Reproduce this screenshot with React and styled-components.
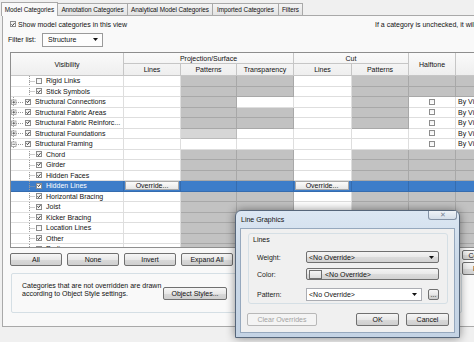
import React from "react";
import styled, { createGlobalStyle } from "styled-components";

const GlobalStyle = createGlobalStyle`
  body {
    margin: 0;
    background: #f0f0f0;
    font-family: "Liberation Sans", Arial, sans-serif;
    font-size: 7px;
    color: #111;
  }
`;

const COLS = "113px 57px 56px 57px 58px 57px 47px 80px";

const Window = styled.div`
  position: relative;
  width: 474px;
  height: 342px;
  overflow: hidden;
  background: #f0f0f0;
`;
const Main = styled.div`
  width: 600px;
`;
const TabStrip = styled.div`
  display: flex;
  align-items: flex-end;
  height: 15px;
  padding-left: 2px;
  box-sizing: border-box;
`;
const Tab = styled.div`
  position: relative;
  z-index: ${(p) => (p.$active ? 1 : 0)};
  width: ${(p) => p.$w}px;
  height: ${(p) => (p.$active ? 14 : 12)}px;
  margin-left: -1px;
  margin-bottom: ${(p) => (p.$active ? -1 : 0)}px;
  box-sizing: border-box;
  border: 1px solid #a9a9a9;
  border-bottom: none;
  background: ${(p) =>
    p.$active ? "#f9f9f9" : "linear-gradient(#f4f4f4, #e3e3e3)"};
  display: flex;
  align-items: center;
  justify-content: center;
  white-space: nowrap;
  font-size: 6.4px;
  letter-spacing: -0.05px;
`;
const Panel = styled.div`
  margin-left: 2px;
  height: 312px;
  box-sizing: border-box;
  border: 1px solid #a9a9a9;
  border-right: none;
  background: #f9f9f9;
  padding-left: 7px;
  display: flex;
  flex-direction: column;
`;
const TopRow = styled.div`
  display: grid;
  grid-template-columns: 365px auto;
  align-items: center;
  height: 10px;
  margin-top: 3px;
  white-space: nowrap;
`;
const CheckLabel = styled.label`
  display: flex;
  align-items: center;
  gap: 2px;
`;
const FilterRow = styled.div`
  display: flex;
  align-items: center;
  height: 15px;
  margin-top: 3px;
`;
const FilterLabel = styled.span`
  width: 34px;
  margin-left: -2px;
`;
const Select = styled.div`
  width: 61px;
  height: 14px;
  box-sizing: border-box;
  border: 1px solid #9a9a9a;
  background: #fdfdfd;
  display: flex;
  align-items: center;
  justify-content: space-between;
  padding: 0 4px 0 5px;
`;
const TableWrap = styled.div`
  margin-top: 5px;
  height: 196px;
  box-sizing: border-box;
  border: 1px solid #8e8e8e;
  border-right: none;
  overflow: hidden;
  background: #fff;
`;
const Head = styled.div`
  display: grid;
  grid-template-columns: ${COLS};
  grid-template-rows: 11px 12px;
  background: linear-gradient(#fafafa, #eeeeee);
`;
const HeadCell = styled.div`
  grid-column: ${(p) => p.$col};
  grid-row: ${(p) => p.$row};
  border-right: 1px solid #c6c6c6;
  border-bottom: 1px solid #c6c6c6;
  display: flex;
  align-items: center;
  justify-content: center;
  white-space: nowrap;
  overflow: hidden;
`;
const Row = styled.div`
  display: grid;
  grid-template-columns: ${COLS};
  height: 10.5px;
`;
const BG = { w: "#ffffff", g: "#c2c2c2", l: "#d6d6d6", s: "#3d7dc9" };
const Cell = styled.div`
  box-sizing: border-box;
  background: ${(p) => BG[p.$kind]};
  border-right: 1px solid rgba(0, 0, 0, 0.13);
  border-bottom: 1px solid rgba(0, 0, 0, 0.13);
  display: flex;
  align-items: center;
  justify-content: ${(p) => p.$justify || "flex-start"};
  padding-left: ${(p) => p.$pad || 0}px;
  color: ${(p) => (p.$kind === "s" ? "#fff" : "#111")};
  white-space: nowrap;
  overflow: hidden;
`;
const VisLabel = styled.span`
  margin-left: 4px;
`;
const Box = styled.span`
  display: inline-flex;
  align-items: center;
  justify-content: center;
  width: 6px;
  height: 6px;
  box-sizing: border-box;
  border: 1px solid #8c8c8c;
  background: linear-gradient(#f2f2f2, #ffffff);
  flex: none;
`;
const CellButton = styled.div`
  width: 54px;
  height: 9px;
  box-sizing: border-box;
  margin-left: 1px;
  border: 1px solid #a8a8a8;
  background: linear-gradient(#fbfbfb, #e6e6e6);
  color: #111;
  display: flex;
  align-items: center;
  justify-content: center;
`;
const Lower = styled.div`
  display: flex;
`;
const LeftCol = styled.div`
  width: 452px;
  display: flex;
  flex-direction: column;
`;
const RightCol = styled.div`
  display: flex;
  flex-direction: column;
  gap: 2px;
  padding-top: 2px;
`;
const ButtonRow = styled.div`
  display: flex;
  gap: 5px;
  margin-top: 5px;
`;
const Button = styled.div`
  width: ${(p) => p.$w || 52}px;
  height: ${(p) => p.$h || 13}px;
  box-sizing: border-box;
  border: 1px solid ${(p) => (p.$disabled ? "#b8b8b8" : "#707070")};
  border-radius: 2px;
  background: ${(p) =>
    p.$disabled ? "#f4f4f4" : "linear-gradient(#f6f6f6 0%, #e8e8e8 50%, #d9d9d9 51%, #cfcfcf 100%)"};
  color: ${(p) => (p.$disabled ? "#a3a3a3" : "#111")};
  display: flex;
  align-items: center;
  justify-content: center;
  white-space: nowrap;
  flex: none;
`;
const NoteBox = styled.div`
  margin: 7px 0 0 1px;
  height: 40px;
  box-sizing: border-box;
  border: 1px solid #d5dfe5;
  border-radius: 2px;
  display: flex;
  align-items: center;
  padding-left: 10px;
`;
const NoteText = styled.div`
  width: 141px;
  line-height: 8px;
  margin-top: -6px;
`;

/* Line Graphics dialog */
const Dialog = styled.div`
  position: absolute;
  left: 235px;
  top: 210px;
  width: 225px;
  height: 128px;
  box-sizing: border-box;
  border: 1px solid #56667a;
  border-radius: 6px 6px 0 0;
  background: linear-gradient(#dce7f3, #cbd9e8 40%, #c4d3e4);
  box-shadow: 0 0 10px rgba(0, 0, 0, 0.45);
  padding: 0 4px 4px 4px;
  display: flex;
  flex-direction: column;
`;
const TitleBar = styled.div`
  height: 17px;
  display: flex;
  align-items: flex-start;
  justify-content: space-between;
`;
const Title = styled.span`
  margin: 5px 0 0 1px;
  color: #111;
`;
const CloseBtn = styled.div`
  width: 29px;
  height: 9px;
  margin-right: -2px;
  box-sizing: border-box;
  border: 1px solid #8593a6;
  border-top: none;
  border-radius: 0 0 3px 3px;
  background: linear-gradient(#eef2f7, #d5dee9);
  display: flex;
  align-items: center;
  justify-content: center;
  color: #7a8594;
  font-size: 7px;
`;
const Client = styled.div`
  flex: 1;
  background: #f0f0f0;
  border: 1px solid #96a8bd;
  display: flex;
  flex-direction: column;
`;
const LinesGroup = styled.div`
  margin: 4px 0 0 7px;
  width: 200px;
  height: 71px;
  box-sizing: border-box;
  border: 1px solid #d5dfe5;
  border-radius: 3px;
  padding: 2px 0 0 8px;
  display: flex;
  flex-direction: column;
`;
const GroupTitle = styled.div`
  height: 8px;
  margin-left: -4px;
`;
const Field = styled.div`
  display: flex;
  align-items: center;
  height: ${(p) => p.$h}px;
  margin-top: ${(p) => p.$mt}px;
`;
const FieldLabel = styled.span`
  width: 49px;
  color: #222;
`;
const Combo = styled.div`
  width: ${(p) => p.$w || 133}px;
  height: 100%;
  box-sizing: border-box;
  border: 1px solid ${(p) => (p.$white ? "#abadb3" : "#707070")};
  border-radius: ${(p) => (p.$white ? 0 : 2)}px;
  background: ${(p) =>
    p.$white ? "#ffffff" : "linear-gradient(#f4f4f4 0%, #e9e9e9 50%, #dcdcdc 51%, #d2d2d2 100%)"};
  display: flex;
  align-items: center;
  padding: 0 4px 0 2px;
  gap: 3px;
`;
const ComboText = styled.span`
  flex: 1;
  white-space: nowrap;
`;
const Swatch = styled.span`
  width: 13px;
  height: 9px;
  box-sizing: border-box;
  border: 1px solid #6f6f6f;
  background: linear-gradient(#f4f4f4, #dcdcdc);
`;
const DialogButtons = styled.div`
  display: flex;
  margin: 9px 0 0 6px;
`;

const Arrow = () => (
  <svg width="5" height="3" viewBox="0 0 5 3">
    <path d="M0 0 H5 L2.5 3 Z" fill="#111" />
  </svg>
);

const Check = () => (
  <svg width="5" height="5" viewBox="0 0 5 5">
    <path d="M0.6 2.4 L1.9 3.8 L4.4 0.8" fill="none" stroke="#1a1a1a" strokeWidth="1.1" />
  </svg>
);

const CheckBox = ({ checked }) => <Box>{checked && <Check />}</Box>;

const Tree = ({ sub, exp }) =>
  sub ? (
    <svg width="25" height="10" viewBox="0 0 25 10">
      <path d="M18.5 0 V10 M18.5 5.5 H24" stroke="#9a9a9a" strokeDasharray="1 1" />
    </svg>
  ) : (
    <svg width="14" height="10" viewBox="0 0 14 10">
      <path d="M2.5 0 V3 M2.5 8 V10 M5 5.5 H13" stroke="#9a9a9a" strokeDasharray="1 1" />
      <rect x="0.5" y="3" width="4.5" height="4.5" fill="#fff" stroke="#9a9a9a" strokeWidth="0.8" />
      <path d={exp === "+" ? "M1.4 5.25 H4.1 M2.75 3.9 V6.6" : "M1.4 5.25 H4.1"} stroke="#333" strokeWidth="0.7" />
    </svg>
  );

const sub = ["w", "g", "g", "w", "g", "g", "g"];
const rows = [
  { label: "Rigid Links", sub: true, checked: false, cells: sub },
  { label: "Stick Symbols", sub: true, checked: true, cells: sub },
  { label: "Structural Connections", exp: "+", checked: true, cells: ["w", "g", "w", "w", "g", "w", "w"] },
  { label: "Structural Fabric Areas", exp: "+", checked: true, cells: ["w", "g", "g", "w", "g", "w", "w"] },
  { label: "Structural Fabric Reinforc...", exp: "+", checked: true, cells: ["w", "g", "g", "w", "g", "w", "w"] },
  { label: "Structural Foundations", exp: "+", checked: true, cells: ["w", "l", "w", "w", "w", "w", "w"] },
  { label: "Structural Framing", exp: "-", checked: true, cells: ["w", "w", "w", "w", "w", "w", "w"] },
  { label: "Chord", sub: true, checked: true, cells: sub },
  { label: "Girder", sub: true, checked: true, cells: sub },
  { label: "Hidden Faces", sub: true, checked: true, cells: sub },
  { label: "Hidden Lines", sub: true, checked: true, selected: true, cells: ["s", "s", "s", "s", "s", "s", "s"] },
  { label: "Horizontal Bracing", sub: true, checked: true, cells: sub },
  { label: "Joist", sub: true, checked: true, cells: sub },
  { label: "Kicker Bracing", sub: true, checked: true, cells: sub },
  { label: "Location Lines", sub: true, checked: false, cells: sub },
  { label: "Other", sub: true, checked: true, cells: sub },
  { label: "Purlins", sub: true, checked: false, cells: sub },
];

const DataRow = ({ row }) => {
  const [lines, pat, trans, cutL, cutP, half, det] = row.cells;
  const top = !row.sub;
  return (
    <Row>
      <Cell $kind={row.selected ? "s" : "w"}>
        <Tree sub={row.sub} exp={row.exp} />
        <CheckBox checked={row.checked} />
        <VisLabel>{row.label}</VisLabel>
      </Cell>
      <Cell $kind={lines}>{row.selected && <CellButton>Override...</CellButton>}</Cell>
      <Cell $kind={pat} />
      <Cell $kind={trans} />
      <Cell $kind={cutL}>{row.selected && <CellButton>Override...</CellButton>}</Cell>
      <Cell $kind={cutP} />
      <Cell $kind={half} $justify="center">{top && <CheckBox />}</Cell>
      <Cell $kind={det} $pad={2}>{top && "By View"}</Cell>
    </Row>
  );
};

const tabs = [
  ["Model Categories", 57, true],
  ["Annotation Categories", 71],
  ["Analytical Model Categories", 86],
  ["Imported Categories", 67],
  ["Filters", 25],
];

export default function App() {
  return (
    <Window>
      <GlobalStyle />
      <Main>
        <TabStrip>
          {tabs.map(([t, w, a]) => (
            <Tab key={t} $w={w} $active={a}>
              {t}
            </Tab>
          ))}
        </TabStrip>
        <Panel>
          <TopRow>
            <CheckLabel>
              <CheckBox checked />
              Show model categories in this view
            </CheckLabel>
            <span>If a category is unchecked, it will not be visible.</span>
          </TopRow>
          <FilterRow>
            <FilterLabel>Filter list:</FilterLabel>
            <Select>
              Structure
              <Arrow />
            </Select>
          </FilterRow>
          <TableWrap>
            <Head>
              <HeadCell $col="1" $row="1 / 3">Visibility</HeadCell>
              <HeadCell $col="2 / 5" $row="1">Projection/Surface</HeadCell>
              <HeadCell $col="5 / 7" $row="1">Cut</HeadCell>
              <HeadCell $col="7" $row="1 / 3">Halftone</HeadCell>
              <HeadCell $col="8" $row="1 / 3">Detail Level</HeadCell>
              <HeadCell $col="2" $row="2">Lines</HeadCell>
              <HeadCell $col="3" $row="2">Patterns</HeadCell>
              <HeadCell $col="4" $row="2">Transparency</HeadCell>
              <HeadCell $col="5" $row="2">Lines</HeadCell>
              <HeadCell $col="6" $row="2">Patterns</HeadCell>
            </Head>
            {rows.map((r) => (
              <DataRow key={r.label} row={r} />
            ))}
          </TableWrap>
          <Lower>
            <LeftCol>
              <ButtonRow>
                <Button>All</Button>
                <Button>None</Button>
                <Button>Invert</Button>
                <Button>Expand All</Button>
              </ButtonRow>
              <NoteBox>
                <NoteText>
                  Categories that are not overridden are drawn
                  <br />
                  according to Object Style settings.
                </NoteText>
                <Button $w={64}>Object Styles...</Button>
              </NoteBox>
            </LeftCol>
            <RightCol>
              <Button $w={40} $h={10}>Collapse</Button>
              <Button $w={40}>Edit...</Button>
            </RightCol>
          </Lower>
        </Panel>
      </Main>

      <Dialog>
        <TitleBar>
          <Title>Line Graphics</Title>
          <CloseBtn>✕</CloseBtn>
        </TitleBar>
        <Client>
          <LinesGroup>
            <GroupTitle>Lines</GroupTitle>
            <Field $h={12} $mt={7}>
              <FieldLabel>Weight:</FieldLabel>
              <Combo>
                <ComboText>&lt;No Override&gt;</ComboText>
                <Arrow />
              </Combo>
            </Field>
            <Field $h={12} $mt={5}>
              <FieldLabel>Color:</FieldLabel>
              <Combo>
                <Swatch />
                <ComboText>&lt;No Override&gt;</ComboText>
              </Combo>
            </Field>
            <Field $h={13} $mt={8}>
              <FieldLabel>Pattern:</FieldLabel>
              <Combo $white $w={116}>
                <ComboText>&lt;No Override&gt;</ComboText>
                <Arrow />
              </Combo>
              <Button $w={11} $h={11} style={{ marginLeft: 6 }}>...</Button>
            </Field>
          </LinesGroup>
          <DialogButtons>
            <Button $w={70} $disabled>Clear Overrides</Button>
            <Button $w={43} style={{ marginLeft: 39 }}>OK</Button>
            <Button $w={43} style={{ marginLeft: 7 }}>Cancel</Button>
          </DialogButtons>
        </Client>
      </Dialog>
    </Window>
  );
}
